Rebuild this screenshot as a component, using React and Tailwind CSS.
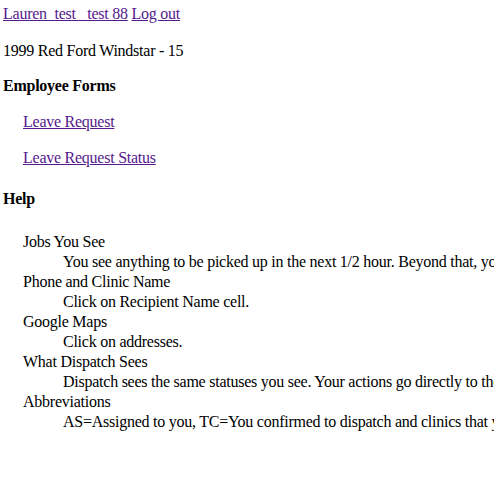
export default function App() {
  const help = [
    ["Jobs You See", "You see anything to be picked up in the next 1/2 hour. Beyond that, you will see them when they come up."],
    ["Phone and Clinic Name", "Click on Recipient Name cell."],
    ["Google Maps", "Click on addresses."],
    ["What Dispatch Sees", "Dispatch sees the same statuses you see. Your actions go directly to them."],
    ["Abbreviations", "AS=Assigned to you, TC=You confirmed to dispatch and clinics that you will pick up."],
  ];

  return (
    <div className="h-[485px] w-[494px] overflow-hidden bg-white px-[3px] pt-[4px] font-['Liberation_Serif',serif] text-[16px] leading-[20px] tracking-[-0.25px] text-black whitespace-nowrap">
      <div>
        <a href="#" className="text-[#551a8b] underline">Lauren_test _test 88</a>{" "}
        <a href="#" className="text-[#551a8b] underline">Log out</a>
      </div>
      <p className="mt-[16px] pt-[1px]">1999 Red Ford Windstar - 15</p>
      <h4 className="mt-[15px] font-bold">Employee Forms</h4>
      <div className="pl-[20px]">
        <p className="mt-[16px]">
          <a href="#" className="text-[#551a8b] underline">Leave Request</a>
        </p>
        <p className="mt-[16px]">
          <a href="#" className="text-[#551a8b] underline">Leave Request Status</a>
        </p>
      </div>
      <h4 className="mt-[21px] font-bold">Help</h4>
      <dl className="mt-[23px] pl-[20px]">
        {help.map(([term, desc]) => (
          <div key={term}>
            <dt>{term}</dt>
            <dd className="pl-[40px]">{desc}</dd>
          </div>
        ))}
      </dl>
    </div>
  );
}
